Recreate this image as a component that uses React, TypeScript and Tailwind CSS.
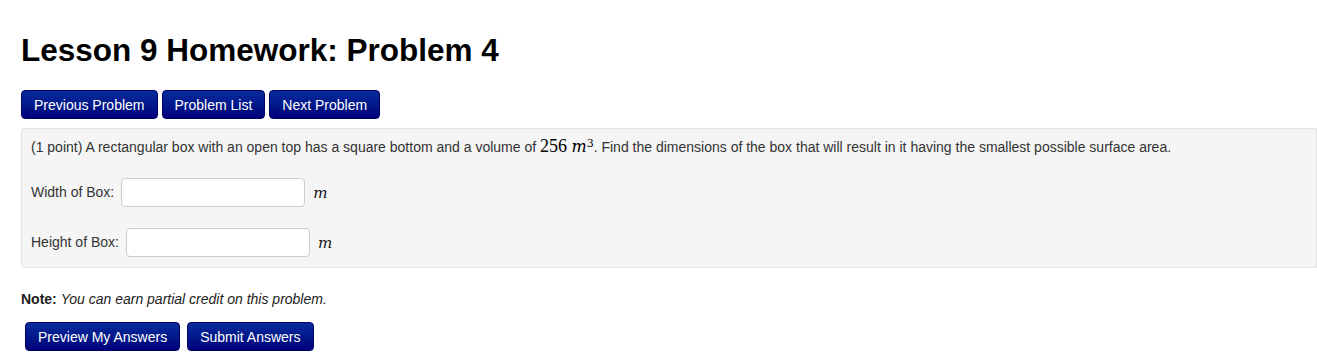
import { FC } from "react"

const navBtn =
  "h-[29px] px-3 rounded-[4px] border border-[#000066] bg-gradient-to-b from-[#0a2a9c] to-[#00007a] text-white text-[14px] leading-5"

const serif = { fontFamily: '"DejaVu Serif", "Liberation Serif", serif' }

const MathM: FC = () => (
  <span className="italic text-[15px]" style={serif}>
    m
  </span>
)

const AnswerRow: FC<{ label: string }> = ({ label }) => (
  <div className="flex items-center h-[29px]">
    <span className="text-[14px] text-[#333]">{label}</span>
    <input
      type="text"
      className="ml-[7px] w-[184px] h-[29px] bg-white border border-[#cccccc] rounded-[4px] px-2"
    />
    <span className="ml-[8px] text-[#111]">
      <MathM />
    </span>
  </div>
)

export default function App() {
  return (
    <div className="min-h-[357px] bg-white" style={{ fontFamily: '"Liberation Sans", Arial, sans-serif' }}>
      <div className="pl-[21px] pt-[30px]">
        <h2 className="text-[31.5px] font-bold leading-[40px] text-black">Lesson 9 Homework: Problem 4</h2>

        <div className="flex gap-[4px] mt-[20px]">
          <button className={navBtn}>Previous Problem</button>
          <button className={navBtn}>Problem List</button>
          <button className={navBtn}>Next Problem</button>
        </div>

        <div className="mt-[9px] bg-[#f5f5f5] border border-[#e3e3e3] rounded-l-[4px] pl-[9px] pt-[8px] h-[140px]">
          <p className="h-5 text-[14px] text-[#333] leading-5">
            (1 point) A rectangular box with an open top has a square bottom and a volume of{" "}
            <span className="text-[18px] leading-none text-[#000]" style={{ fontFamily: '"Liberation Serif", serif' }}>
              256 <span className="italic text-[16px]" style={serif}>m</span>
              <sup className="text-[11px]" style={serif}>3</sup>
            </span>
            . Find the dimensions of the box that will result in it having the smallest possible surface area.
          </p>
          <div className="mt-[21px] flex flex-col gap-[21px]">
            <AnswerRow label="Width of Box:" />
            <AnswerRow label="Height of Box:" />
          </div>
        </div>

        <p className="mt-[21px] text-[14px] text-[#222] leading-5">
          <span className="font-bold">Note:</span> <i>You can earn partial credit on this problem.</i>
        </p>

        <div className="flex gap-[7px] mt-[13px] pl-[4px]">
          <button className={navBtn}>Preview My Answers</button>
          <button className={navBtn}>Submit Answers</button>
        </div>
      </div>
    </div>
  )
}
